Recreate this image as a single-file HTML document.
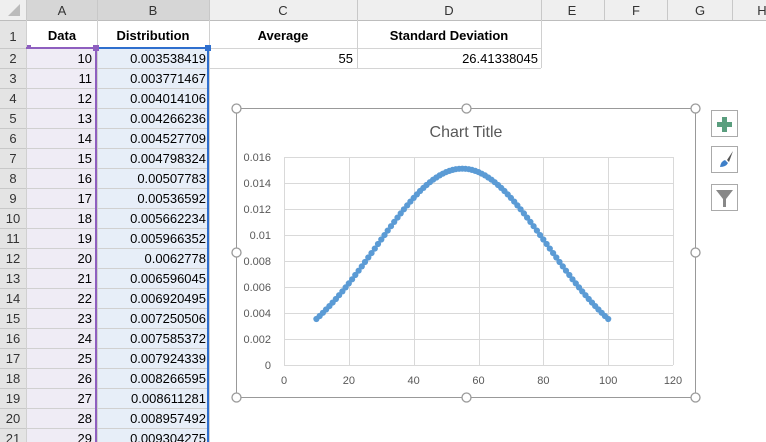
<!DOCTYPE html>
<html><head><meta charset="utf-8"><style>
body{margin:0;width:766px;height:442px;overflow:hidden;background:#fff;font-family:"Liberation Sans",sans-serif;font-size:13px;color:#000;position:relative}
.a{position:absolute;box-sizing:border-box}
</style></head><body>
<svg class="a" style="left:0;top:0" width="766" height="442" id="s"></svg>
<script>
var s='';
function R(x,y,w,h,f){s+='<rect x="'+x+'" y="'+y+'" width="'+w+'" height="'+h+'" fill="'+f+'"/>';}
function L(x1,y1,x2,y2,c,w){s+='<line x1="'+x1+'" y1="'+y1+'" x2="'+x2+'" y2="'+y2+'" stroke="'+c+'" stroke-width="'+(w||1)+'"/>';}
function T(x,y,t,a,extra){s+='<text x="'+x+'" y="'+y+'" text-anchor="'+(a||'start')+'" '+(extra||'')+'>'+t+'</text>';}
R(0,0,766,20,'#efefef');R(0,20,26,422,'#e4e4e4');R(26,0,183,20,'#d6d6d6');
R(26,48,71,394,'#efecf5');R(97,48,112,394,'#e7eef8');
var cols=[26,97,209,357,541,604,667,732];
cols.forEach(function(x){L(x+.5,0,x+.5,20,'#c8c8c8');});
L(0,20.5,766,20.5,'#bdbdbd');
L(26,48.5,541,48.5,'#d4d4d4');L(209,68.5,541,68.5,'#d4d4d4');
for(var i=0;i<20;i++){var y=68.5+i*20;L(0,y,26,y,'#c8c8c8');L(26,y,209,y,'#d0d0d0');}
L(0,48.5,26,48.5,'#c8c8c8');
[26,97,209].forEach(function(x){L(x+.5,20,x+.5,442,'#d0d0d0');});
L(357.5,20,357.5,68,'#d0d0d0');L(541.5,20,541.5,68,'#d0d0d0');
var hd=['A','B','C','D','E','F','G','H'],cx=[62,153,283,449,572,636,700,762];
hd.forEach(function(h,i){T(cx[i],15,h,'middle','font-size="13" fill="#333"');});
s+='<path d="M20 4 L20 16 L8 16Z" fill="#bbb"/>';
for(var r=1;r<=21;r++){var y=r==1?41:63+(r-2)*20;T(13,y,r,'middle','font-size="13" fill="#333"');}
T(62,40,'Data','middle','font-weight="bold"');T(153,40,'Distribution','middle','font-weight="bold"');
T(283,40,'Average','middle','font-weight="bold"');T(449,40,'Standard Deviation','middle','font-weight="bold"');
T(353,63,'55','end');T(538,63,'26.41338045','end');
var m=55,sd=26.41338045,k=1/(sd*Math.sqrt(2*Math.PI));
function pdf(x){return k*Math.exp(-(x-m)*(x-m)/(2*sd*sd));}
for(var r=2;r<=21;r++){var d=r+8,y=63+(r-2)*20;T(92,y,d,'end');T(206,y,pdf(d).toFixed(9).replace(/0+$/,''),'end');}
L(26,48,97,48,'#8e5fbf',2);L(96,48,96,442,'#8e5fbf',2);L(97,48,209,48,'#2f6fce',2);L(208,48,208,442,'#2f6fce',2);
R(27,45,4,4,'#8e5fbf');R(93,45,6,6,'#8e5fbf');R(205,45,6,6,'#2f6fce');
R(236,108,459,289,'#fff');s+='<rect x="236.5" y="108.5" width="459" height="289" fill="none" stroke="#999"/>';
T(466,137,'Chart Title','middle','font-size="16" fill="#595959"');
var x0=284,x1=673,y0=365,y1=157;
for(var i=0;i<=8;i++){var y=y0-(y0-y1)*i/8;L(x0,Math.round(y)+.5,x1,Math.round(y)+.5,'#d9d9d9');T(271,Math.round(y)+4,i==0?'0':(i*0.002).toFixed(3).replace(/0+$/,''),'end','font-size="11" fill="#595959"');}
for(var i=0;i<=6;i++){var x=x0+(x1-x0)*i/6;L(Math.round(x)+.5,y1,Math.round(x)+.5,y0,'#d9d9d9');T(x,384,i*20,'middle','font-size="11" fill="#595959"');}
var pts=[];for(var x=10;x<=100;x++){var px=x0+x/120*(x1-x0),py=y0-pdf(x)/0.016*(y0-y1);pts.push(px.toFixed(1)+','+py.toFixed(1));s+='<circle cx="'+px.toFixed(1)+'" cy="'+py.toFixed(1)+'" r="3.1" fill="#5b9bd5"/>';}
s+='<polyline points="'+pts.join(' ')+'" fill="none" stroke="#5b9bd5" stroke-width="2.5"/>';
[[236,108],[466,108],[695,108],[236,252],[695,252],[236,397],[466,397],[695,397]].forEach(function(p){s+='<circle cx="'+(p[0]+.5)+'" cy="'+(p[1]+.5)+'" r="4.5" fill="#fff" stroke="#999" stroke-width="1.3"/>';});
[110,146,184].forEach(function(y){s+='<rect x="711.5" y="'+(y+.5)+'" width="26" height="26" fill="#fff" stroke="#aaa"/>';});
s+='<path d="M722 117h5v5h5v5h-5v5h-5v-5h-5v-5h5z" fill="#5a9e7e"/>';
s+='<path d="M733 151 L727 160 L729 162 Z" fill="#555"/><path d="M720 167 Q721 161 725 160 L728 163 Q726 167 720 167Z" fill="#3e7fc8"/>';
s+='<path d="M716 190 H733 L726 199 V207 L723 207 V199 Z" fill="#888"/>';
document.getElementById('s').innerHTML=s;
</script>
</body></html>
